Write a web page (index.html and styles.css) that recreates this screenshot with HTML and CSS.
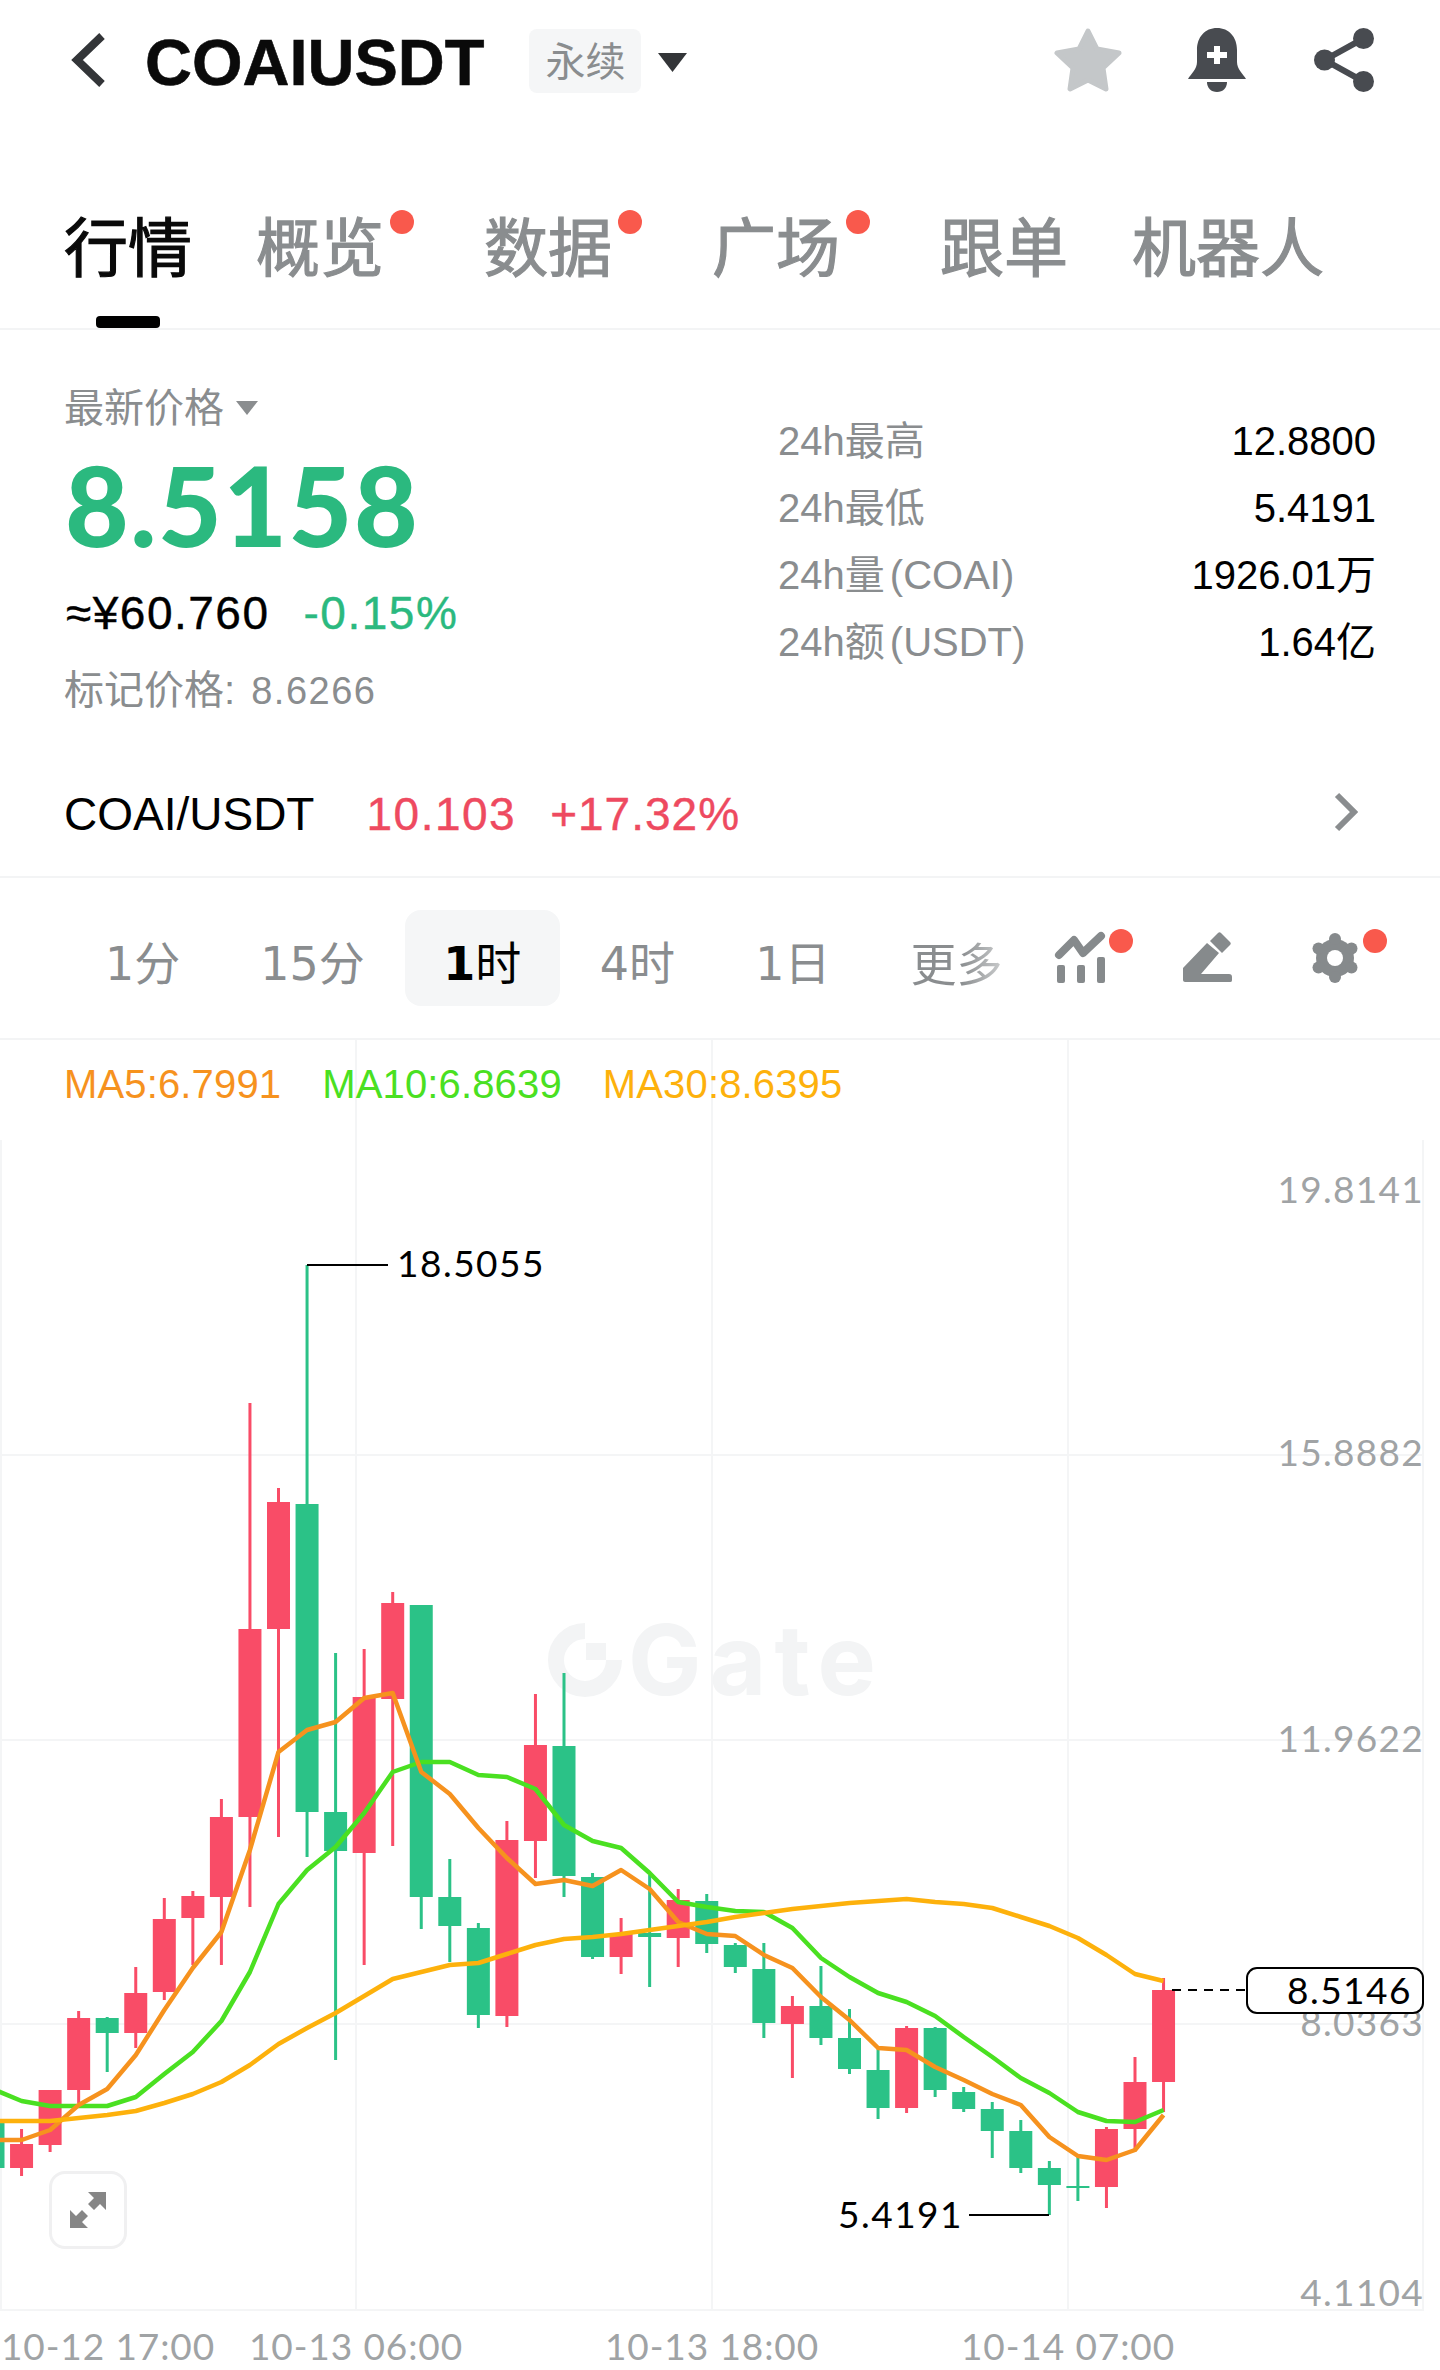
FILE: index.html
```html
<!DOCTYPE html>
<html lang="zh-CN">
<head>
  <meta charset="UTF-8" />
  <meta name="viewport" content="width=device-width, initial-scale=1.0"/>
  <title>COAIUSDT</title>
  <link rel="stylesheet" href="styles.css">
</head>
<body>
  <header class="topbar">
    <svg class="back" width="36" height="56" viewBox="0 0 36 56"><polyline points="31,4 6,28 31,52"/></svg>
    <h1 class="symbol">COAIUSDT</h1>
    <span class="contract">永续</span>
    <svg class="contract-caret" width="31" height="21" viewBox="0 0 31 21"><path d="M1 1H30L15.5 20Z"/></svg>
    <div class="top-actions">
      <svg class="star" width="68" height="64" viewBox="0 0 68 64"><path d="M34 3L43 21L65 25L49 40L52 61L34 52L16 61L19 40L3 25L25 21Z"/></svg>
      <svg width="58" height="64" viewBox="0 0 58 64">
        <path class="ink" d="M29 0C17 0 9 9 9 22V34C9 41 3 46 0 51H58C55 46 49 41 49 34V22C49 9 41 0 29 0Z"/>
        <path class="ink" d="M19 54H39C39 60 35 64 29 64C23 64 19 60 19 54Z"/>
        <path class="cross" d="M26 18H32V24H39V30H32V36H26V30H19V24H26Z"/>
      </svg>
      <svg class="share" width="60" height="64" viewBox="0 0 60 64">
        <polyline points="49.5,10.5 10.5,32 49.5,53.5"/>
        <circle cx="10.5" cy="32" r="10.5"/>
        <circle cx="49.5" cy="10.5" r="10.5"/>
        <circle cx="49.5" cy="53.5" r="10.5"/>
      </svg>
    </div>
  </header>

  <nav class="tabs">
    <a class="tab active">行情</a>
    <a class="tab has-dot">概览</a>
    <a class="tab has-dot">数据</a>
    <a class="tab has-dot">广场</a>
    <a class="tab">跟单</a>
    <a class="tab">机器人</a>
  </nav>

  <section class="quote">
    <div class="quote-main">
      <div class="price-type">最新价格<svg width="22" height="14" viewBox="0 0 22 14"><path d="M0 0H22L11 14Z"/></svg></div>
      <div class="last-price">8.5158</div>
      <div class="fiat-row"><span>≈¥60.760</span><span class="down">-0.15%</span></div>
      <div class="mark-price">标记价格: <span class="mark-value">8.6266</span></div>
    </div>
    <dl class="stats">
      <div class="stat"><dt>24h最高</dt><dd>12.8800</dd></div>
      <div class="stat"><dt>24h最低</dt><dd>5.4191</dd></div>
      <div class="stat"><dt>24h量 (COAI)</dt><dd>1926.01万</dd></div>
      <div class="stat"><dt>24h额 (USDT)</dt><dd>1.64亿</dd></div>
    </dl>
  </section>

  <a class="pair">
    <span class="pair-name">COAI/USDT</span>
    <span class="up pair-price">10.103</span>
    <span class="up pair-change">+17.32%</span>
    <svg class="pair-arrow" width="24" height="40" viewBox="0 0 24 40"><polyline points="3,3 20,20 3,37"/></svg>
  </a>

  <div class="toolbar">
    <a class="interval">1分</a>
    <a class="interval">15分</a>
    <a class="interval active"><b>1</b>时</a>
    <a class="interval">4时</a>
    <a class="interval">1日</a>
    <a class="interval more"><span>更多</span></a>
    <div class="tools">
      <span class="tool has-dot">
        <svg width="50" height="50" viewBox="0 0 50 50">
          <polyline class="zigzag" points="3,22 18,7 27,20 45,3"/>
          <rect x="1" y="32" width="8" height="18" rx="2"/>
          <rect x="21" y="32" width="8" height="18" rx="2"/>
          <rect x="41" y="24" width="8" height="26" rx="2"/>
        </svg>
      </span>
      <span class="tool">
        <svg width="50" height="50" viewBox="0 0 50 50">
          <path d="M0 35L24 10L36 20L18 41H46C48 41 49 42 49 44V47C49 49 48 49 46 49H2C1 49 0 48 0 47Z"/>
          <path d="M27 8L35 0C36 -1 37 -1 38 0L47 9C48 10 48 11 47 12L39 20Z"/>
        </svg>
      </span>
      <span class="tool has-dot">
        <svg class="gear" width="50" height="50" viewBox="0 0 50 50">
          <circle cx="25" cy="25" r="19"/>
          <circle cx="25" cy="6" r="6"/>
          <circle cx="25" cy="44" r="6"/>
          <circle cx="8.5" cy="15.5" r="6"/>
          <circle cx="41.5" cy="15.5" r="6"/>
          <circle cx="8.5" cy="34.5" r="6"/>
          <circle cx="41.5" cy="34.5" r="6"/>
          <circle class="hole" cx="25" cy="25" r="8"/>
        </svg>
      </span>
    </div>
  </div>

  <section class="chart">
    <div class="ma-legend">
      <span class="ma5">MA5:6.7991</span>
      <span class="ma10">MA10:6.8639</span>
      <span class="ma30">MA30:8.6395</span>
    </div>
    <svg id="kline" class="kline" width="1440" height="1330" viewBox="0 1040 1440 1330"></svg>
    <button class="expand">
      <svg width="36" height="36" viewBox="0 0 36 36">
        <path d="M18 0H36V18L30 12L24 18L18 12L24 6Z"/>
        <path d="M18 36H0V18L6 24L12 18L18 24L12 30Z"/>
      </svg>
    </button>
  </section>

  <script src="chart.js"></script>
</body>
</html>
```

FILE: styles.css
```css
* {
  box-sizing: border-box;
}

html, body {
  margin: 0;
  padding: 0;
  background: #fff;
}

body {
  width: 1440px;
  height: 2370px;
  overflow: hidden;
  font-family: "Liberation Sans", "Noto Sans CJK SC", sans-serif;
  color: #000;
}

a {
  display: block;
}

.up {
  color: #ee4a60;
}

.down {
  color: #2bb97f;
}

/* top bar */
.topbar {
  display: flex;
  align-items: center;
  height: 120px;
  padding: 0 66px 0 71px;
}

.back polyline {
  fill: none;
  stroke: #333538;
  stroke-width: 8;
}

.symbol {
  margin: 4px 0 0 38px;
  font-size: 65px;
  font-weight: 700;
  line-height: 1;
  color: #0a0a0a;
  -webkit-text-stroke: 0.6px #0a0a0a;
}

.contract {
  margin: 2px 0 0 45px;
  padding: 0 16px;
  height: 64px;
  line-height: 66px;
  font-size: 40px;
  color: #8a8d8f;
  background: #f5f6f7;
  border-radius: 8px;
}

.contract-caret {
  margin: 4px 0 0 16px;
  fill: #333538;
}

.top-actions {
  display: flex;
  align-items: center;
  gap: 66px;
  margin-left: auto;
}

.star path {
  fill: #c4c7c9;
  stroke: #c4c7c9;
  stroke-width: 5;
  stroke-linejoin: round;
}

.ink {
  fill: #484b50;
}

.cross {
  fill: #fff;
}

.share {
  margin-left: 2px;
}

.share polyline {
  fill: none;
  stroke: #484b50;
  stroke-width: 6;
}

.share circle {
  fill: #484b50;
}

/* tabs */
.tabs {
  display: flex;
  gap: 64px;
  height: 210px;
  padding: 97px 0 0 64px;
  border-bottom: 2px solid #f3f4f5;
}

.tab {
  position: relative;
  height: 111px;
  font-size: 64px;
  line-height: 64px;
  color: #8a8d8f;
  -webkit-text-stroke: 1.2px #8a8d8f;
}

.tab.active {
  color: #0a0a0a;
  -webkit-text-stroke: 1.2px #0a0a0a;
}

.tab.active::after {
  content: "";
  position: absolute;
  left: 32px;
  bottom: 0;
  width: 64px;
  height: 12px;
  background: #000;
  border-radius: 4px;
}

.tab.has-dot {
  margin-right: 36px;
}

.tab.has-dot::before,
.tool.has-dot::before {
  content: "";
  position: absolute;
  width: 24px;
  height: 24px;
  background: #f9594c;
  border-radius: 50%;
}

.tab.has-dot::before {
  right: -30px;
  top: -7px;
}

/* price block */
.quote {
  display: flex;
  justify-content: space-between;
  height: 418px;
  padding: 54px 64px 0;
}

.price-type {
  display: flex;
  align-items: center;
  gap: 12px;
  font-size: 40px;
  line-height: 48px;
  color: #8a8d8f;
}

.price-type svg {
  fill: #8a8d8f;
}

.last-price {
  margin: 17px 0 0 1px;
  font-family: Lato, "Liberation Sans", sans-serif;
  font-size: 110px;
  font-weight: 900;
  line-height: 110px;
  letter-spacing: 1.5px;
  color: #2bb97f;
}

.fiat-row {
  display: flex;
  gap: 34px;
  margin: 26px 0 0 2px;
  font-size: 46px;
  line-height: 56px;
  letter-spacing: 1.5px;
  -webkit-text-stroke: 0.4px;
}

.mark-price {
  margin-top: 25px;
  font-size: 40px;
  line-height: 48px;
  color: #8a8d8f;
}

.mark-value {
  margin-left: 5px;
  font-size: 38px;
  letter-spacing: 1.5px;
}

.stats {
  width: 598px;
  margin: 24px 0 0;
}

.stat {
  display: flex;
  justify-content: space-between;
  height: 67px;
  font-size: 40px;
  line-height: 67px;
}

.stat dt {
  color: #8a8d8f;
  word-spacing: -6px;
}

.stat dd {
  margin: 0;
  color: #000;
}

/* spot pair link */
.pair {
  display: flex;
  align-items: center;
  height: 130px;
  padding: 3px 82px 0 64px;
  font-size: 46px;
  border-bottom: 2px solid #f3f4f5;
}

.pair-price {
  margin-left: 52px;
  letter-spacing: 1.5px;
  -webkit-text-stroke: 0.4px;
}

.pair-change {
  margin-left: 34px;
  letter-spacing: 1px;
  -webkit-text-stroke: 0.4px;
}

.pair-arrow {
  margin: -3px 0 0 auto;
}

.pair-arrow polyline {
  fill: none;
  stroke: #8a8d8f;
  stroke-width: 6;
}

/* interval toolbar */
.toolbar {
  display: flex;
  align-items: center;
  height: 162px;
  padding: 0 80px 0 65px;
  border-bottom: 2px solid #f3f4f5;
}

.interval {
  height: 96px;
  padding: 7px 40px 0;
  font-family: "DejaVu Sans", "Noto Sans CJK SC", sans-serif;
  font-size: 46px;
  line-height: 94px;
  color: #8a8d8f;
  border-radius: 16px;
}

.interval.active {
  padding: 7px 38.5px 0;
  color: #000;
  background: #f5f6f7;
}

.interval.more {
  padding-top: 4px;
  font-family: "Noto Sans CJK SC", sans-serif;
}

.more span {
  background: linear-gradient(90deg, #8a8d8f 55%, #c9cbcc 100%);
  -webkit-background-clip: text;
  background-clip: text;
  color: transparent;
}

.tools {
  display: flex;
  gap: 77px;
  margin-left: auto;
}

.tool {
  position: relative;
  display: block;
  width: 50px;
  height: 50px;
  fill: #868a8c;
}

.tool svg {
  display: block;
  overflow: visible;
}

.tool.has-dot::before {
  right: -27px;
  top: -4px;
}

.zigzag {
  fill: none;
  stroke: #868a8c;
  stroke-width: 8;
  stroke-linecap: round;
  stroke-linejoin: round;
}

.gear .hole {
  fill: #fff;
}

/* chart */
.chart {
  position: relative;
  height: 1330px;
}

.ma-legend {
  position: absolute;
  left: 64px;
  top: 21px;
  display: flex;
  gap: 41px;
  font-size: 40px;
  line-height: 46px;
  letter-spacing: 0.15px;
}

.ma5 {
  color: #f6921e;
}

.ma10 {
  color: #4ae021;
}

.ma30 {
  color: #fdb10c;
}

.kline {
  display: block;
}

.grid {
  stroke: #f4f5f6;
  stroke-width: 2;
}

.wm-ring {
  fill: none;
  stroke: #f3f4f5;
  stroke-width: 16;
}

.wm-block {
  fill: #f3f4f5;
}

.wm-text {
  font-family: Inter, "Liberation Sans", sans-serif;
  font-size: 98px;
  font-weight: 700;
  letter-spacing: 8px;
  fill: #f3f4f5;
}

.candle-up {
  fill: #f94c67;
}

.candle-down {
  fill: #2bc287;
}

.line {
  fill: none;
  stroke-width: 4.5;
  stroke-linejoin: round;
}

.line-ma5 {
  stroke: #f6921e;
}

.line-ma10 {
  stroke: #4ae021;
}

.line-ma30 {
  stroke: #fdb10c;
}

.axis-label {
  font-family: Lato, "Liberation Sans", sans-serif;
  fill: #a0a3a5;
  font-size: 37px;
  letter-spacing: 1.3px;
}

.time-label {
  letter-spacing: 0.9px;
}

.extreme-label {
  font-family: Lato, "Liberation Sans", sans-serif;
  font-size: 37px;
  letter-spacing: 1.5px;
  fill: #000;
}

.leader {
  stroke: #000;
  stroke-width: 2;
  fill: none;
}

.leader-dash {
  stroke-dasharray: 9 7;
}

.price-tag {
  fill: #fff;
  stroke: #000;
  stroke-width: 2;
}

.expand {
  position: absolute;
  left: 49px;
  top: 1131px;
  display: flex;
  align-items: center;
  justify-content: center;
  width: 78px;
  height: 78px;
  padding: 0;
  background: #fff;
  border: 3px solid #f0f0f1;
  border-radius: 16px;
  fill: #868686;
}
```

FILE: chart.js
```js
const SVG_NS = "http://www.w3.org/2000/svg";
const svg = document.getElementById("kline");

const candleX = (i) => -7 + 28.55 * i;

// wickTop, bodyTop, bodyBottom, wickBottom, u = up / d = down
const candles = [
  [2123, 2123, 2168, 2168, "d"],
  [2129, 2144, 2168, 2176, "u"],
  [2090, 2090, 2145, 2152, "u"],
  [2011, 2018, 2090, 2103, "u"],
  [2017, 2018, 2033, 2072, "d"],
  [1967, 1993, 2033, 2048, "u"],
  [1898, 1919, 1992, 2000, "u"],
  [1891, 1896, 1918, 1965, "u"],
  [1799, 1817, 1897, 1965, "u"],
  [1403, 1629, 1817, 1907, "u"],
  [1488, 1502, 1629, 1837, "u"],
  [1265, 1504, 1812, 1857, "d"],
  [1653, 1812, 1851, 2060, "d"],
  [1649, 1697, 1853, 1965, "u"],
  [1592, 1603, 1699, 1846, "u"],
  [1605, 1605, 1897, 1929, "d"],
  [1859, 1897, 1926, 1962, "d"],
  [1923, 1928, 2015, 2028, "d"],
  [1821, 1840, 2016, 2027, "u"],
  [1694, 1745, 1841, 1878, "u"],
  [1673, 1746, 1876, 1897, "d"],
  [1873, 1877, 1957, 1959, "d"],
  [1918, 1934, 1957, 1974, "u"],
  [1875, 1933, 1937, 1987, "d"],
  [1889, 1900, 1938, 1967, "u"],
  [1894, 1901, 1944, 1953, "d"],
  [1943, 1945, 1967, 1973, "d"],
  [1943, 1969, 2023, 2038, "d"],
  [1996, 2006, 2024, 2078, "u"],
  [1966, 2006, 2038, 2045, "d"],
  [2009, 2038, 2069, 2074, "d"],
  [2047, 2070, 2108, 2119, "d"],
  [2026, 2028, 2108, 2113, "u"],
  [2027, 2028, 2090, 2097, "d"],
  [2087, 2092, 2109, 2112, "d"],
  [2102, 2109, 2131, 2158, "d"],
  [2120, 2131, 2168, 2173, "d"],
  [2161, 2168, 2185, 2215, "d"],
  [2157, 2186, 2188, 2201, "d"],
  [2127, 2129, 2187, 2208, "u"],
  [2057, 2082, 2129, 2150, "u"],
  [1978, 1990, 2082, 2112, "u"],
];

const ma5 = [2140, 2140, 2130, 2105, 2089, 2055, 2010, 1968, 1932, 1850, 1752, 1730, 1722, 1698, 1693, 1772, 1794, 1828, 1858, 1884, 1880, 1886, 1870, 1889, 1922, 1934, 1936, 1955, 1968, 1997, 2020, 2048, 2050, 2067, 2080, 2094, 2105, 2137, 2156, 2160, 2150, 2115];
const ma10 = [2089, 2101, 2106, 2106, 2106, 2097, 2074, 2052, 2021, 1972, 1904, 1870, 1847, 1813, 1772, 1762, 1762, 1775, 1777, 1789, 1825, 1841, 1848, 1873, 1902, 1907, 1911, 1912, 1928, 1958, 1977, 1993, 2002, 2016, 2037, 2057, 2078, 2093, 2112, 2121, 2122, 2110];
const ma30 = [2121, 2121, 2121, 2118, 2115, 2111, 2103, 2094, 2082, 2065, 2044, 2028, 2013, 1996, 1979, 1972, 1965, 1963, 1954, 1945, 1939, 1937, 1934, 1930, 1926, 1922, 1917, 1913, 1909, 1906, 1903, 1901, 1899, 1902, 1904, 1908, 1917, 1926, 1938, 1955, 1974, 1981];

function add(tag, attrs, text) {
  const el = document.createElementNS(SVG_NS, tag);
  Object.keys(attrs).forEach((key) => el.setAttribute(key, attrs[key]));
  if (text) el.textContent = text;
  svg.appendChild(el);
  return el;
}

function drawGrid() {
  [1455, 1740, 2024, 2310].forEach((y) => {
    add("line", { class: "grid", x1: 0, x2: 1424, y1: y, y2: y });
  });
  [356, 712, 1068].forEach((x) => {
    add("line", { class: "grid", x1: x, x2: x, y1: 1040, y2: 2310 });
  });
  [1, 1423].forEach((x) => {
    add("line", { class: "grid", x1: x, x2: x, y1: 1140, y2: 2310 });
  });
}

function drawWatermark() {
  add("path", { class: "wm-ring", d: "M585 1631A29 29 0 1 0 614 1660" });
  add("rect", { class: "wm-block", x: 586, y: 1643, width: 20, height: 17 });
  add("text", { class: "wm-text", x: 628, y: 1695 }, "Gate");
}

function drawCandles() {
  candles.forEach((c, i) => {
    const x = candleX(i);
    const cls = c[4] === "u" ? "candle-up" : "candle-down";
    add("rect", { class: cls, x: x - 1.5, y: c[0], width: 3, height: c[3] - c[0] });
    add("rect", { class: cls, x: x - 11.5, y: c[1], width: 23, height: c[2] - c[1] });
  });
}

function drawLine(values, cls) {
  const points = values.map((y, i) => candleX(i).toFixed(1) + "," + y).join(" ");
  add("polyline", { class: "line " + cls, points: points });
}

function drawLabels() {
  const axis = [["19.8141", 1203], ["15.8882", 1466], ["11.9622", 1752], ["8.0363", 2036], ["4.1104", 2306]];
  axis.forEach((a) => {
    add("text", { class: "axis-label", x: 1424, y: a[1], "text-anchor": "end" }, a[0]);
  });

  const times = [["10-12 17:00", 1, "start"], ["10-13 06:00", 356, "middle"], ["10-13 18:00", 712, "middle"], ["10-14 07:00", 1068, "middle"]];
  times.forEach((t) => {
    add("text", { class: "axis-label time-label", x: t[1], y: 2360, "text-anchor": t[2] }, t[0]);
  });

  add("polyline", { class: "leader", points: "307,1265 388,1265" });
  add("text", { class: "extreme-label", x: 397, y: 1277 }, "18.5055");
  add("polyline", { class: "leader", points: "969,2215 1049,2215" });
  add("text", { class: "extreme-label", x: 838, y: 2228 }, "5.4191");

  add("line", { class: "leader leader-dash", x1: 1172, x2: 1246, y1: 1990, y2: 1990 });
  add("rect", { class: "price-tag", x: 1247, y: 1968, width: 176, height: 45, rx: 10 });
  add("text", { class: "extreme-label", x: 1412, y: 2004, "text-anchor": "end" }, "8.5146");
}

drawGrid();
drawWatermark();
drawCandles();
drawLine(ma10, "line-ma10");
drawLine(ma5, "line-ma5");
drawLine(ma30, "line-ma30");
drawLabels();
```
